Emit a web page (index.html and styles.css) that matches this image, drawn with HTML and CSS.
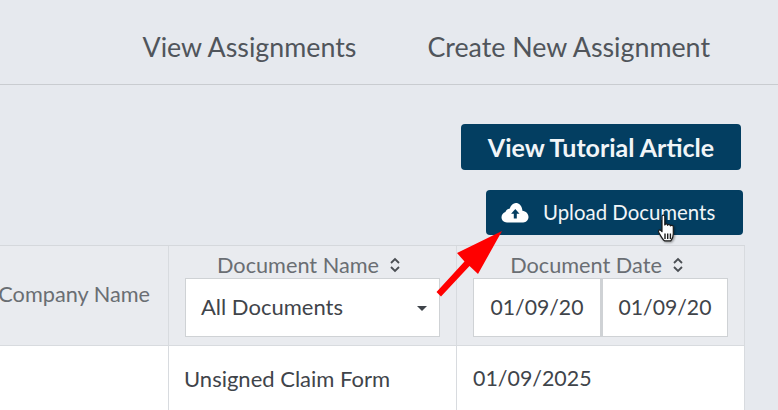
FILE: index.html
```html
<!DOCTYPE html>
<html lang="en">
<head>
<meta charset="utf-8">
<title>Documents</title>
<link rel="stylesheet" href="styles.css">
</head>
<body>
<header class="topbar">
  <a class="nav-link">View Assignments</a>
  <a class="nav-link">Create New Assignment</a>
</header>
<main class="content">
  <div class="actions">
    <button class="btn btn-tutorial">View Tutorial Article</button>
    <button class="btn btn-upload">
      <svg class="cloud" viewBox="0 0 28 21" aria-hidden="true">
        <path fill="#fff" d="M6 20.500C2.800 20.500.5 18.200.5 15.300c0-2.600 1.700-4.500 3.900-5.200C5 8 6.700 6.700 8.600 6.800 10 3.200 12.200 1 14.800 1c3.300 0 5.800 2.600 6.400 6.200.1.600.2 1 .2 1.600 3.500.4 6.100 3 6.100 6.300 0 3-2.300 5.400-5.300 5.400z"/>
        <path fill="#033e61" d="M14.300 7l4.200 4.800h-2.700v4.700h-3v-4.700h-2.700z"/>
      </svg>
      <span>Upload Documents</span>
    </button>
  </div>
  <div class="table">
    <div class="cell head company"><span class="head-label">Company Name</span></div>
    <div class="cell head">
      <div class="title">Document Name <svg class="sort" viewBox="0 0 12 16" aria-hidden="true"><path d="M2 6l4-4 4 4M2 10l4 4 4-4"/></svg></div>
      <div class="select"><span>All Documents</span><i class="caret"></i></div>
    </div>
    <div class="cell head">
      <div class="title">Document Date <svg class="sort" viewBox="0 0 12 16" aria-hidden="true"><path d="M2 6l4-4 4 4M2 10l4 4 4-4"/></svg></div>
      <div class="dates"><div class="date">01/09/20</div><div class="date">01/09/20</div></div>
    </div>
    <div class="cell body"></div>
    <div class="cell body"><span>Unsigned Claim Form</span></div>
    <div class="cell body body-date"><span>01/09/2025</span></div>
  </div>
</main>
<svg class="arrow" viewBox="0 0 67 67" aria-hidden="true">
  <path fill="#ff0000" d="M66 1L42 44 33.500 36 5 66.500 .5 62 28.500 31.500 21 23z"/>
</svg>
<svg class="hand" viewBox="0 0 20 29" aria-hidden="true">
  <path fill="#fff" stroke="#1b1b1b" stroke-width="1.200" stroke-linejoin="round" d="M5 2.500c0-1.800 2.800-1.800 2.800 0V11c.6-1.500 2.800-1.200 2.800.3.500-1.200 2.700-1 2.800.5.700-.9 2.900-.6 2.900 1v7c0 3-1.500 5.800-2.500 7H7.500C5.500 25.500 3.500 21.500 1.800 18.500.7 16.500 2.500 15 4 16.500l1 1.200z"/>
  <path stroke="#1b1b1b" stroke-width="1.400" fill="none" d="M8 19.500v5.500M10.700 19.500v5.500M13.400 19.500v5.500"/>
</svg>
</body>
</html>
```

FILE: styles.css
```css
html, body {
  margin: 0;
  padding: 0;
  height: 410px;
  overflow: hidden;
}
body {
  background: #e6e9ee;
  font-family: Lato, "Open Sans", sans-serif;
  color: #3f444a;
  position: relative;
}
.topbar {
  box-sizing: border-box;
  border-bottom: 1px solid #c9ccd0;
  height: 85px;
  display: flex;
  justify-content: flex-end;
  align-items: center;
  gap: 71px;
  padding: 9px 68px 0 0;
}
.nav-link {
  font-size: 26.800px;
  color: #50555b;
  white-space: nowrap;
}
.content {
  display: flex;
  flex-direction: column;
}
.actions {
  display: flex;
  flex-direction: column;
  align-items: flex-end;
  padding-top: 39px;
  gap: 20px;
}
.btn {
  border: 0;
  border-radius: 4px;
  background: #033e61;
  color: #f1f5f8;
  font-family: inherit;
  display: flex;
  align-items: center;
  padding: 0;
}
.btn-tutorial {
  width: 280px;
  height: 46px;
  margin-right: 37px;
  justify-content: center;
  font-size: 25px;
  font-weight: 700;
}
.btn-upload {
  width: 257px;
  height: 45px;
  margin-right: 35px;
  padding-left: 15px;
  box-sizing: border-box;
  font-size: 20.400px;
  font-weight: 400;
}
.btn-upload span {
  margin-left: 14px;
  margin-top: -2px;
}
.cloud {
  width: 28px;
  height: 21px;
  flex: none;
}
.table {
  margin-top: 10px;
  width: 745px;
  display: grid;
  grid-template-columns: 169px 288px 288px;
  grid-template-rows: 100px 70px;
  box-sizing: border-box;
  border-top: 1px solid #d5d8dc;
}
.cell {
  box-sizing: border-box;
  border-right: 1px solid #d8dbdf;
}
.head {
  background: #e9ebef;
  border-bottom: 1px solid #d8dbdf;
  display: flex;
  flex-direction: column;
  padding: 7px 16px 0;
  color: #6a6e73;
  font-size: 21.700px;
}
.company {
  align-items: flex-end;
  justify-content: center;
  padding: 0 18px 4px 0;
}
.head-label {
  white-space: nowrap;
}
.title {
  display: flex;
  justify-content: center;
  align-items: center;
  gap: 10px;
  height: 24px;
  padding-right: 7px;
  white-space: nowrap;
}
.sort {
  width: 12px;
  height: 16px;
  fill: none;
  stroke: #4a4e53;
  stroke-width: 1.800;
}
.select {
  margin-top: 1px;
  height: 59px;
  box-sizing: border-box;
  background: #fff;
  border: 1px solid #cfd2d5;
  display: flex;
  align-items: center;
  justify-content: space-between;
  padding: 0 12px 2px 15px;
  color: #3f444a;
  font-size: 22px;
}
.caret {
  width: 0;
  height: 0;
  margin-top: 4px;
  border-left: 5px solid transparent;
  border-right: 5px solid transparent;
  border-top: 5px solid #3f444a;
}
.dates {
  margin-top: 1px;
  display: flex;
  height: 59px;
}
.date {
  width: 128px;
  box-sizing: border-box;
  background: #fff;
  border: 1px solid #cfd2d5;
  display: flex;
  align-items: center;
  justify-content: center;
  color: #3f444a;
  padding-bottom: 2px;
  font-size: 21.200px;
}
.date + .date {
  border-left-width: 2px;
  width: 127px;
}
.body {
  background: #fff;
  display: flex;
  align-items: center;
  padding: 0 15px 6px;
  font-size: 22px;
  color: #3f444a;
}
.body-date {
  padding-left: 16px;
  font-size: 21.400px;
}
.arrow {
  position: absolute;
  left: 436px;
  top: 230px;
  width: 67px;
  height: 67px;
}
.hand {
  position: absolute;
  left: 657px;
  top: 214px;
  width: 20px;
  height: 29px;
  filter: drop-shadow(1px 1px 1px rgba(0, 0, 0, 0.4));
}
```
